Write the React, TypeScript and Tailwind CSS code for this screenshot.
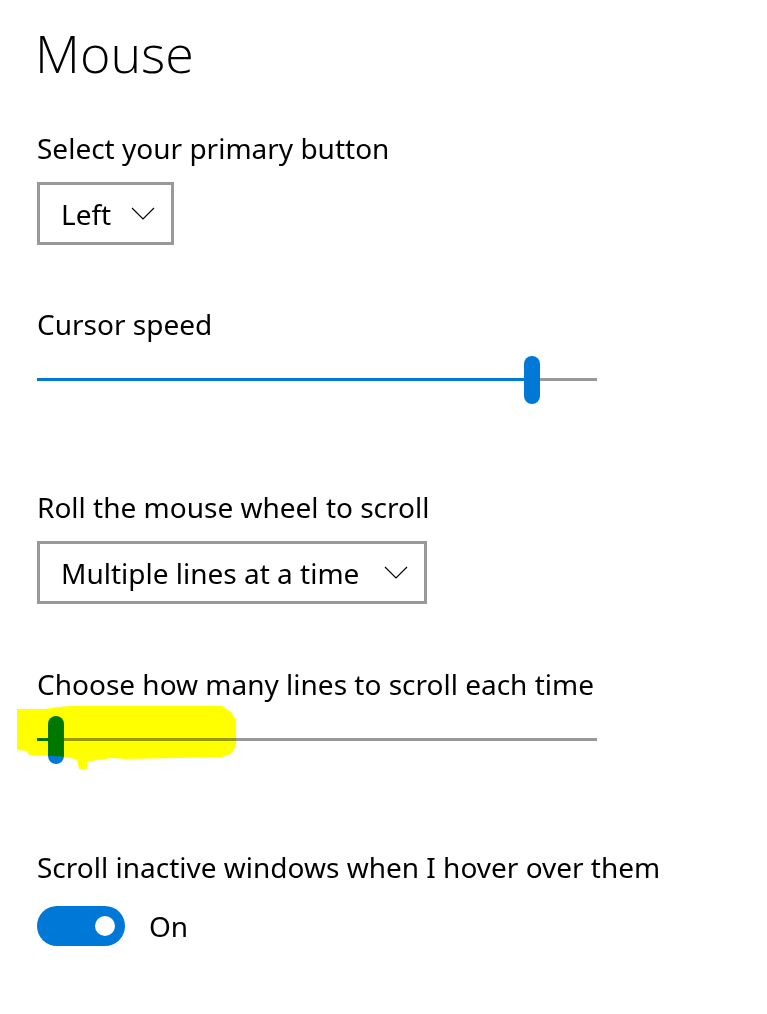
import * as React from 'react';

const font = { fontFamily: '"Segoe UI", "Noto Sans", "Open Sans", sans-serif' };
const titleFont = { fontFamily: '"Segoe UI Light", "Open Sans", "Noto Sans", sans-serif' };

function Chevron() {
  return (
    <svg width="24" height="13" viewBox="0 0 24 13" fill="none" className="shrink-0">
      <path d="M1 1 L12 12 L23 1" stroke="#000" strokeWidth="1.2" />
    </svg>
  );
}

function Dropdown({ value, width }: { value: string; width: string }) {
  return (
    <div className={`${width} h-[63px] border-[3px] border-[#999999] flex items-center justify-between pl-[21px] pr-[16px]`}>
      <span className="text-[28px] leading-none text-black">{value}</span>
      <Chevron />
    </div>
  );
}

function Slider({ pos, highlight }: { pos: number; highlight?: boolean }) {
  return (
    <div className="relative w-[560px] h-[48px]">
      <div className="absolute left-0 right-0 top-[22px] h-[3px] bg-[#999999]" />
      <div className="absolute left-0 top-[22px] h-[3px] bg-[#0078d7]" style={{ width: pos }} />
      <div
        className="absolute top-0 w-[16px] h-[48px] rounded-full bg-[#0078d7]"
        style={{ left: pos - 8 }}
      />
      {highlight && (
        <svg
          className="absolute left-[-20px] top-[-10px] mix-blend-multiply pointer-events-none"
          width="230"
          height="64"
          viewBox="0 0 230 64"
        >
          <path
            d="M0 3 L28 3 L40 1 L70 -1 L150 -2 L205 0 L214 6 L219 14 L219 40 L214 48 L205 51 L110 53 L95 52 L80 54 L70 56 L70 63 L62 63 L60 54 L50 51 L35 50 L12 49 L10 45 L0 44 Z"
            fill="#ffff00"
          />
        </svg>
      )}
    </div>
  );
}

function Toggle() {
  return (
    <div className="flex items-center gap-[24px]">
      <div className="w-[88px] h-[40px] rounded-full bg-[#0078d7] flex items-center justify-end pr-[10px]">
        <div className="w-[20px] h-[20px] rounded-full bg-white" />
      </div>
      <span className="text-[28px] leading-none text-black">On</span>
    </div>
  );
}

export default function App() {
  return (
    <div className="min-h-screen bg-white text-black pl-[37px] pt-[18px]" style={font}>
      <h1 className="text-[52px] font-light leading-[70px] -ml-[2px]" style={titleFont}>
        Mouse
      </h1>

      <div className="mt-[42px] text-[28px] leading-[36px]">Select your primary button</div>
      <div className="mt-[16px]">
        <Dropdown value="Left" width="w-[137px]" />
      </div>

      <div className="mt-[61px] text-[28px] leading-[36px]">Cursor speed</div>
      <div className="mt-[14px]">
        <Slider pos={495} />
      </div>

      <div className="mt-[85px] text-[28px] leading-[36px]">Roll the mouse wheel to scroll</div>
      <div className="mt-[16px]">
        <Dropdown value="Multiple lines at a time" width="w-[390px]" />
      </div>

      <div className="mt-[62px] text-[28px] leading-[36px]">Choose how many lines to scroll each time</div>
      <div className="mt-[14px]">
        <Slider pos={19} highlight />
      </div>

      <div className="mt-[85px] text-[28px] leading-[36px]">Scroll inactive windows when I hover over them</div>
      <div className="mt-[21px]">
        <Toggle />
      </div>
    </div>
  );
}
